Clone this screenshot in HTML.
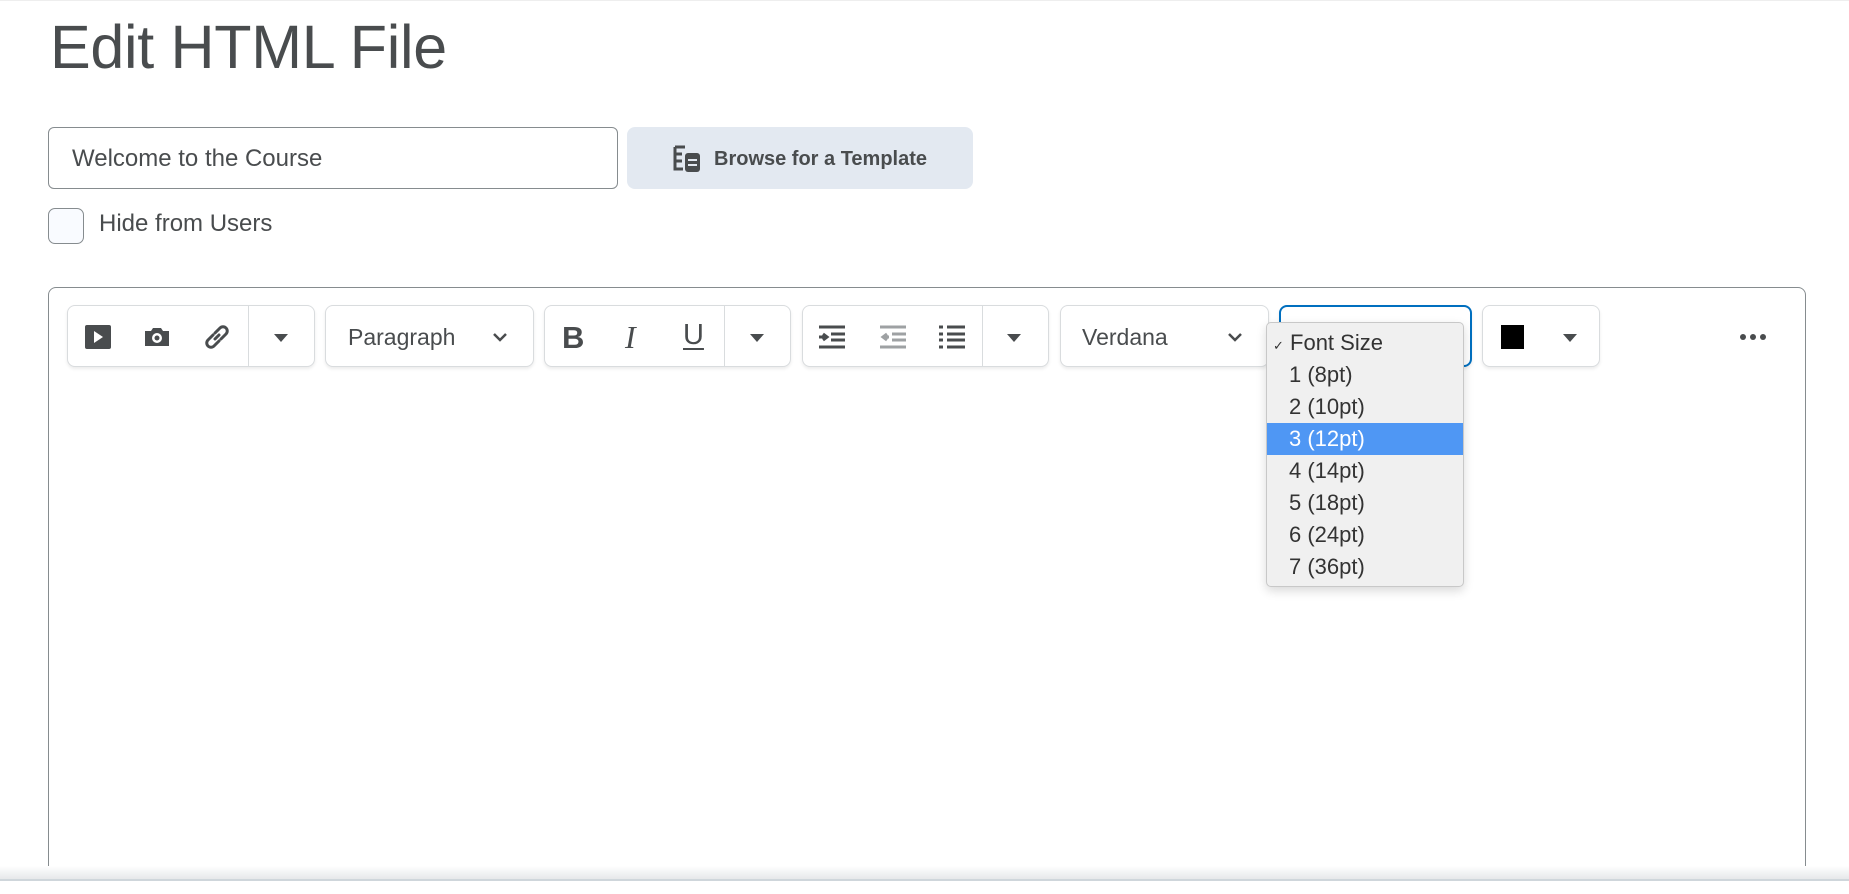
<!DOCTYPE html>
<html style="width:1849px;height:894px;overflow:hidden"><head><meta charset="utf-8"><style>
*{box-sizing:border-box;margin:0;padding:0}
body{width:1849px;height:894px;overflow:hidden;background:#fff;font-family:"Liberation Sans",sans-serif;color:#494c4e;position:relative}
.a{position:absolute}
h1{position:absolute;left:50px;top:12px;font-size:61px;font-weight:400;color:#494c4e;letter-spacing:-0.3px}
.inp{left:48px;top:127px;width:570px;height:62px;border:1px solid #868c8f;border-radius:6px;font-size:24px;padding-left:23px;line-height:62px}
.btn{left:627px;top:127px;width:346px;height:62px;background:#e3e9f1;border-radius:8px;font-size:20px;font-weight:bold;line-height:64px}
.cb{left:48px;top:208px;width:36px;height:36px;border:1px solid #868c8f;border-radius:7px;background:#f9fbff}
.lbl{left:99px;top:209px;font-size:24px;line-height:30px}
.ed{left:48px;top:287px;width:1758px;height:620px;border:1px solid #868c8f;border-radius:8px}
.g{position:absolute;top:305px;height:62px;border:1px solid #d9dcde;border-radius:8px;box-shadow:0 2px 3px rgba(0,0,0,.08);background:#fff}
.sep{position:absolute;top:0;bottom:0;width:1px;background:#d9dcde}
.ic{position:absolute;top:337px;transform:translate(-50%,-50%)}
.caret{position:absolute;width:0;height:0;border-left:7px solid transparent;border-right:7px solid transparent;border-top:8px solid #494c4e;transform:translate(-50%,-50%);top:338px}
.t{position:absolute;font-size:23px;top:322px;line-height:30px}
.dd{left:1266px;top:322px;width:198px;height:265px;background:#f0f0f0;border:1px solid #c8c8c8;border-radius:5px;box-shadow:0 4px 10px rgba(0,0,0,.15);font-size:22px;color:#333;padding-top:4px}
.dd div{height:32px;line-height:32px;padding-left:22px}
.dd .s{background:#4f97f4;color:#fff}
.bot{left:0;top:866px;width:1849px;height:15px;background:linear-gradient(#fff,#e6e8ea);border-bottom:2px solid #cfd6db}
.bw{left:0;top:881px;width:1849px;height:13px;background:#fff}
</style></head><body>
<div class="a" style="left:0;top:0;width:1849px;height:1px;background:#eee"></div>
<h1>Edit HTML File</h1>
<div class="a inp">Welcome to the Course</div>
<div class="a btn">
<svg class="a" style="left:45px;top:18px" width="30" height="28" viewBox="0 0 30 28"><path d="M3 2h10M3 2v22h8M3 9h7M3 16h7" stroke="#494c4e" stroke-width="3" fill="none"/><rect x="13" y="8" width="15" height="19" rx="3" fill="#494c4e"/><path d="M16 15h9M16 20h9" stroke="#e3e9f1" stroke-width="2"/></svg>
<span class="a" style="left:87px;top:0">Browse for a Template</span></div>
<div class="a cb"></div>
<div class="a lbl">Hide from Users</div>
<div class="a ed"></div>

<div class="g" style="left:67px;width:248px"><div class="sep" style="left:180px"></div></div>
<div class="g" style="left:325px;width:209px"></div>
<div class="g" style="left:544px;width:247px"><div class="sep" style="left:179px"></div></div>
<div class="g" style="left:802px;width:247px"><div class="sep" style="left:179px"></div></div>
<div class="g" style="left:1060px;width:209px"></div>
<div class="g" style="left:1279px;width:193px;border:2px solid #006fbf"></div>
<div class="g" style="left:1482px;width:118px"></div>

<svg class="ic" style="left:98px" width="26" height="24" viewBox="0 0 26 24"><rect width="26" height="24" rx="2" fill="#494c4e"/><path d="M9 6l9 6-9 6z" fill="#fff"/></svg>
<svg class="ic" style="left:157px" width="28" height="22" viewBox="0 0 28 22"><path d="M2 5h6l2-3h8l2 3h6v15H2z" fill="#494c4e"/><circle cx="14" cy="12" r="5" fill="#fff"/><circle cx="14" cy="12" r="2.5" fill="#494c4e"/></svg>
<svg class="ic" style="left:217px" width="28" height="28" viewBox="0 0 28 28"><path d="M12 16l4-4M10 12l-5 5a4 4 0 0 0 6 6l5-5M18 16l5-5a4 4 0 0 0-6-6l-5 5" stroke="#494c4e" stroke-width="3" fill="none" stroke-linecap="round"/></svg>
<div class="caret" style="left:281px"></div>
<div class="t" style="left:348px">Paragraph</div>
<svg class="ic" style="left:500px" width="16" height="10" viewBox="0 0 16 10"><path d="M2 2l6 6 6-6" stroke="#494c4e" stroke-width="2.5" fill="none"/></svg>
<div class="t" style="left:562px;font-weight:bold;font-size:31px;top:323px">B</div>
<div class="t" style="left:625px;font-style:italic;font-family:'Liberation Serif',serif;font-size:32px;top:322px">I</div>
<div class="t" style="left:683px;font-size:29px;top:320px;text-decoration:underline;text-underline-offset:4px">U</div>
<div class="caret" style="left:757px"></div>
<svg class="ic" style="left:832px" width="26" height="24" viewBox="0 0 26 24"><path d="M0 2h26M12 9h14M12 15h14M0 22h26M0 12h7M4 9l4 3-4 3" stroke="#494c4e" stroke-width="3" fill="none"/></svg>
<svg class="ic" style="left:893px" width="26" height="24" viewBox="0 0 26 24"><path d="M0 2h26M12 9h14M12 15h14M0 22h26M3 12h6M7 9l-4 3 4 3" stroke="#9ea1a3" stroke-width="3" fill="none"/></svg>
<svg class="ic" style="left:952px" width="26" height="24" viewBox="0 0 26 24"><path d="M0 2h4M8 2h18M0 9h4M8 9h18M0 15h4M8 15h18M0 22h4M8 22h18" stroke="#494c4e" stroke-width="3" fill="none"/></svg>
<div class="caret" style="left:1014px"></div>
<div class="t" style="left:1082px">Verdana</div>
<svg class="ic" style="left:1235px" width="16" height="10" viewBox="0 0 16 10"><path d="M2 2l6 6 6-6" stroke="#494c4e" stroke-width="2.5" fill="none"/></svg>
<div class="a" style="left:1501px;top:325px;width:23px;height:24px;background:#000"></div>
<div class="caret" style="left:1570px"></div>
<svg class="ic" style="left:1753px" width="28" height="8" viewBox="0 0 28 8"><circle cx="4" cy="4" r="3" fill="#494c4e"/><circle cx="14" cy="4" r="3" fill="#494c4e"/><circle cx="24" cy="4" r="3" fill="#494c4e"/></svg>

<div class="a dd">
<div style="padding-left:6px"><span style="font-size:13px">✓</span> Font Size</div>
<div>1 (8pt)</div><div>2 (10pt)</div><div class="s">3 (12pt)</div><div>4 (14pt)</div><div>5 (18pt)</div><div>6 (24pt)</div><div>7 (36pt)</div>
</div>
<div class="a bot"></div>
<div class="a bw"></div>
</body></html>
